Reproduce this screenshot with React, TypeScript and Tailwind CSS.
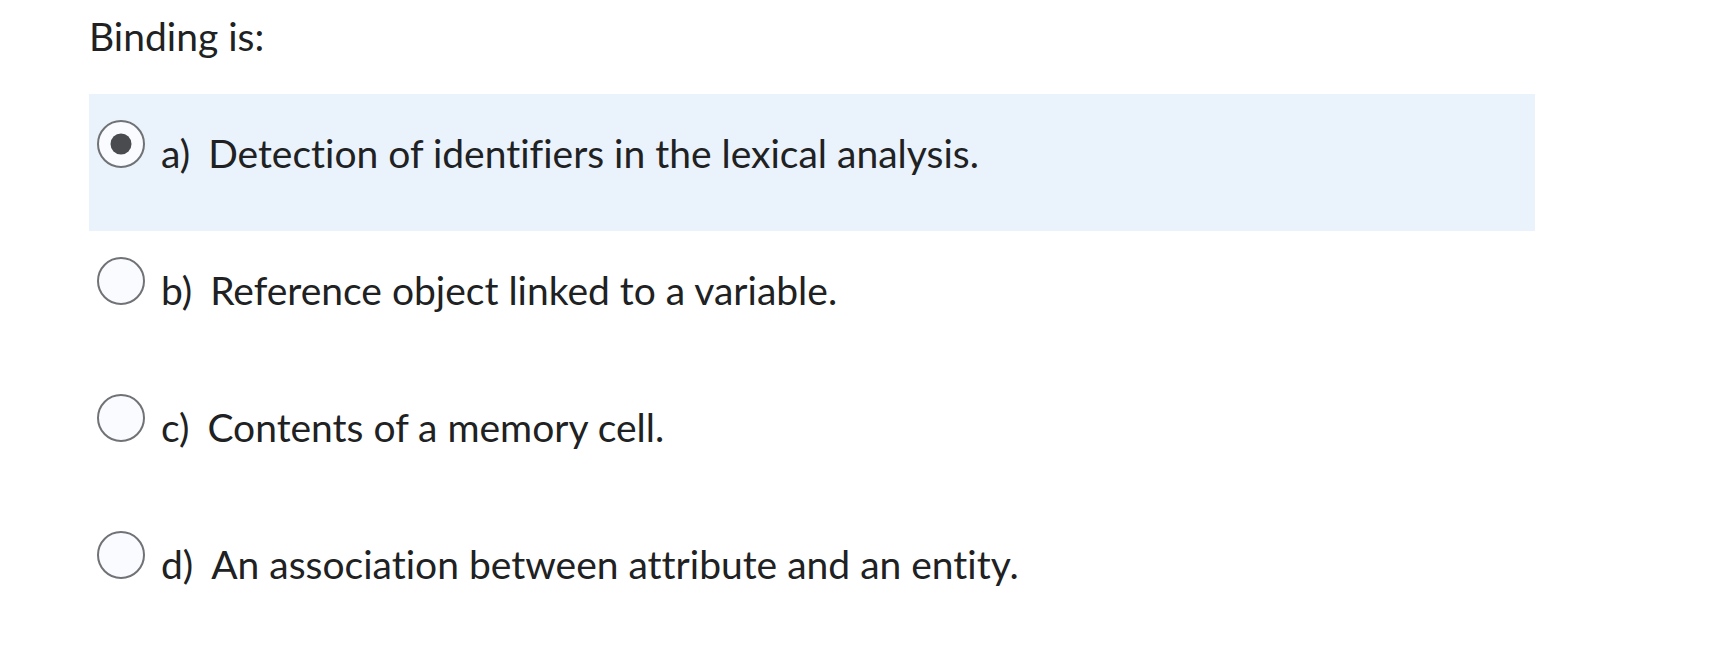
import { useState } from "react";

const OPTIONS = [
  { key: "a)", text: "Detection of identifiers in the lexical analysis." },
  { key: "b)", text: "Reference object linked to a variable." },
  { key: "c)", text: "Contents of a memory cell." },
  { key: "d)", text: "An association between attribute and an entity." },
];

function Radio({ checked }: { checked: boolean }) {
  return (
    <svg width="48" height="48" viewBox="0 0 48 48" className="shrink-0">
      <circle cx="24" cy="24" r="23" fill="#f9fbfe" stroke="#707275" strokeWidth="2" />
      {checked && <circle cx="24" cy="24" r="10.5" fill="#494b4f" />}
    </svg>
  );
}

export default function App() {
  const [selected, setSelected] = useState(0);

  return (
    <div
      className="min-h-[670px] bg-white pl-[89px] pt-[12px] text-[#202122] [font-variant-ligatures:none]"
      style={{ fontFamily: "Lato, 'Open Sans', sans-serif" }}
    >
      <h1 className="text-[39px] leading-[48px]">Binding is:</h1>
      <div className="mt-[34px] w-[1446px]">
        {OPTIONS.map((o, i) => (
          <div
            key={o.key}
            onClick={() => setSelected(i)}
            className={`flex h-[137px] items-start pl-[8px] pt-[26px] ${selected === i ? "bg-[#eaf2fb]" : ""}`}
          >
            <Radio checked={selected === i} />
            <div className="ml-[16px] mt-[10px] flex text-[39px] leading-[47px]">
              <span className="mr-[18px]">{o.key}</span>
              <span>{o.text}</span>
            </div>
          </div>
        ))}
      </div>
    </div>
  );
}
